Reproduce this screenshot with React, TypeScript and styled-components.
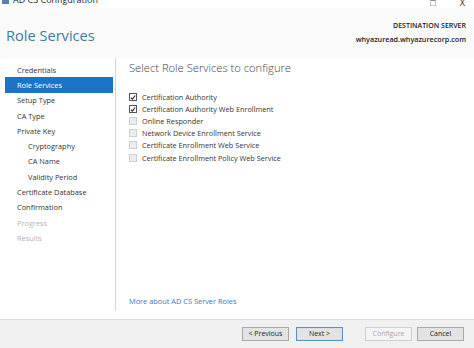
import React from "react";
import styled, { createGlobalStyle } from "styled-components";

const Global = createGlobalStyle`
  html, body { margin: 0; padding: 0; background: #ffffff; }
  body { width: 474px; height: 348px; overflow: hidden; font-family: "Open Sans", "Noto Sans", sans-serif; }
  * { box-sizing: border-box; }
`;

const Window = styled.div`
  width: 474px;
  height: 348px;
  display: flex;
  flex-direction: column;
  background: #fafafa;
  overflow: hidden;
`;

const TitleBar = styled.div`
  height: 8px;
  flex: none;
  background: #ffffff;
  display: flex;
  align-items: flex-end;
  overflow: hidden;
`;

const TitleText = styled.div`
  display: flex;
  align-items: center;
  gap: 4px;
  padding-left: 2px;
  margin-bottom: 3px;
  font-size: 9px;
  line-height: 10px;
  color: #222;
  white-space: nowrap;
`;

const AppIcon = styled.span`
  width: 7px;
  height: 7px;
  background: #5c7fa8;
  display: inline-block;
`;

const Controls = styled.div`
  margin-left: auto;
  display: flex;
  gap: 24px;
  padding-right: 9px;
  margin-bottom: 1px;
  font-size: 9px;
  line-height: 9px;
  color: #333;
`;

const Header = styled.div`
  height: 50px;
  flex: none;
  display: flex;
  justify-content: space-between;
  align-items: flex-start;
  padding: 13px 8px 0 6px;
`;

const PageTitle = styled.h1`
  margin: 4px 0 0 0;
  font-weight: 400;
  font-size: 14.6px;
  line-height: 20px;
  color: #3a7aa8;
`;

const Dest = styled.div`
  text-align: right;
  display: flex;
  flex-direction: column;
  gap: 5px;
  color: #222;
`;

const DestLabel = styled.div`
  font-size: 7px;
  line-height: 9px;
  font-weight: 600;
`;

const DestValue = styled.div`
  font-size: 7.2px;
  line-height: 9px;
  font-weight: 600;
`;

const Body = styled.div`
  flex: 1;
  display: flex;
  min-height: 0;
  background: #ffffff;
`;

const Nav = styled.nav`
  width: 116px;
  flex: none;
  display: flex;
  flex-direction: column;
  padding: 4px 2px 0 5px;
  border-right: 1px solid #d6d6d6;
  margin: 0 0 8px 0;
`;

const NavItem = styled.div<{ $active?: boolean; $indent?: boolean; $disabled?: boolean }>`
  height: 15.3px;
  flex: none;
  display: flex;
  align-items: center;
  padding-left: ${(p) => (p.$indent ? "23px" : "12px")};
  font-size: 7.4px;
  color: ${(p) => (p.$active ? "#ffffff" : p.$disabled ? "#b4b4b4" : "#333333")};
  background: ${(p) => (p.$active ? "#1c74c4" : "transparent")};
  white-space: nowrap;
`;

const Content = styled.main`
  flex: 1;
  display: flex;
  flex-direction: column;
  padding: 2px 0 13px 13px;
`;

const ContentTitle = styled.h2`
  margin: 0;
  font-size: 11.2px;
  line-height: 16px;
  font-weight: 300;
  color: #444;
`;

const Options = styled.div`
  margin-top: 15px;
  display: flex;
  flex-direction: column;
`;

const OptionRow = styled.label`
  height: 12.1px;
  display: flex;
  align-items: center;
  gap: 5px;
  font-size: 7.3px;
  color: #333;
  white-space: nowrap;
`;

const Box = styled.span<{ $checked?: boolean }>`
  width: 8px;
  height: 8px;
  flex: none;
  border: 1px solid ${(p) => (p.$checked ? "#555" : "#cfcfcf")};
  background: ${(p) => (p.$checked ? "#fff" : "#ececec")};
  display: flex;
  align-items: center;
  justify-content: center;
`;

const Link = styled.a`
  margin-top: auto;
  font-size: 7.4px;
  line-height: 10px;
  color: #3b78c2;
  text-decoration: none;
`;

const Footer = styled.div`
  height: 29px;
  flex: none;
  background: #f0f0f0;
  border-top: 1px solid #dcdcdc;
  display: flex;
  align-items: center;
  justify-content: flex-end;
  padding: 0 10px 0 0;
`;

const Button = styled.button<{ $gap?: number; $disabled?: boolean; $focused?: boolean }>`
  width: 47px;
  height: 14px;
  margin-left: ${(p) => p.$gap ?? 0}px;
  padding: 0;
  font-family: inherit;
  font-size: 7px;
  line-height: 12px;
  color: ${(p) => (p.$disabled ? "#a8a8a8" : "#222")};
  background: ${(p) => (p.$disabled ? "#f4f4f4" : "#e3e3e3")};
  border: 1px solid ${(p) => (p.$focused ? "#5a8fc8" : p.$disabled ? "#cfcfcf" : "#a9a9a9")};
  box-shadow: ${(p) => (p.$focused ? "inset 0 0 0 1px #cde0f3" : "none")};
`;

const Check = () => (
  <svg width="7" height="7" viewBox="0 0 7 7">
    <path d="M1 3.6 L2.8 5.4 L6 1.2" stroke="#222" strokeWidth="1.2" fill="none" />
  </svg>
);

const navItems: { label: string; active?: boolean; indent?: boolean; disabled?: boolean }[] = [
  { label: "Credentials" },
  { label: "Role Services", active: true },
  { label: "Setup Type" },
  { label: "CA Type" },
  { label: "Private Key" },
  { label: "Cryptography", indent: true },
  { label: "CA Name", indent: true },
  { label: "Validity Period", indent: true },
  { label: "Certificate Database" },
  { label: "Confirmation" },
  { label: "Progress", disabled: true },
  { label: "Results", disabled: true },
];

const options = [
  { label: "Certification Authority", checked: true },
  { label: "Certification Authority Web Enrollment", checked: true },
  { label: "Online Responder" },
  { label: "Network Device Enrollment Service" },
  { label: "Certificate Enrollment Web Service" },
  { label: "Certificate Enrollment Policy Web Service" },
];

export default function App() {
  return (
    <>
      <Global />
      <Window>
        <TitleBar>
          <TitleText>
            <AppIcon />
            AD CS Configuration
          </TitleText>
          <Controls>
            <span>□</span>
            <span>X</span>
          </Controls>
        </TitleBar>
        <Header>
          <PageTitle>Role Services</PageTitle>
          <Dest>
            <DestLabel>DESTINATION SERVER</DestLabel>
            <DestValue>whyazuread.whyazurecorp.com</DestValue>
          </Dest>
        </Header>
        <Body>
          <Nav>
            {navItems.map((n) => (
              <NavItem key={n.label} $active={n.active} $indent={n.indent} $disabled={n.disabled}>
                {n.label}
              </NavItem>
            ))}
          </Nav>
          <Content>
            <ContentTitle>Select Role Services to configure</ContentTitle>
            <Options>
              {options.map((o) => (
                <OptionRow key={o.label}>
                  <Box $checked={o.checked}>{o.checked && <Check />}</Box>
                  {o.label}
                </OptionRow>
              ))}
            </Options>
            <Link href="#">More about AD CS Server Roles</Link>
          </Content>
        </Body>
        <Footer>
          <Button>&lt; Previous</Button>
          <Button $gap={7} $focused>Next &gt;</Button>
          <Button $gap={22} $disabled>Configure</Button>
          <Button $gap={5}>Cancel</Button>
        </Footer>
      </Window>
    </>
  );
}
